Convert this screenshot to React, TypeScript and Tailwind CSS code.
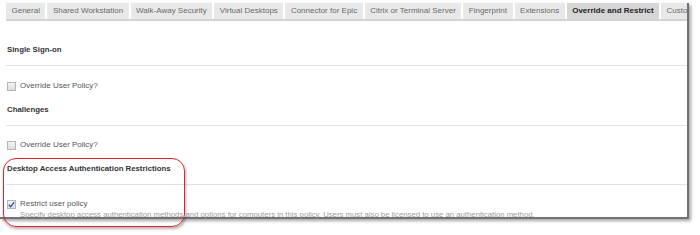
import React from "react";

const tabs = [
  "General",
  "Shared Workstation",
  "Walk-Away Security",
  "Virtual Desktops",
  "Connector for Epic",
  "Citrix or Terminal Server",
  "Fingerprint",
  "Extensions",
  "Override and Restrict",
  "Custom",
];

function Checkbox({ checked = false }: { checked?: boolean }) {
  return (
    <span className="relative inline-flex h-[9px] w-[9px] shrink-0 items-center justify-center border border-[#b5b5b5] bg-gradient-to-b from-[#f4f4f4] to-[#dedede]">
      {checked && (
        <svg viewBox="0 0 10 10" className="absolute h-[9px] w-[9px]">
          <path d="M2 5.2 L4.1 7.4 L8 2.4" fill="none" stroke="#3b5da6" strokeWidth="1.6" />
        </svg>
      )}
    </span>
  );
}

function Option({ label, checked }: { label: string; checked?: boolean }) {
  return (
    <label className="flex h-[12px] items-center gap-[4px] pl-[7px] text-[8px] leading-[12px] text-[#555]">
      <Checkbox checked={checked} />
      <span>{label}</span>
    </label>
  );
}

function Heading({ title, className = "" }: { title: string; className?: string }) {
  return (
    <div
      className={`ml-[6px] border-b border-[#e2e2e2] pb-[9px] pl-[1px] text-[7.8px] leading-[12px] font-bold text-[#333] ${className}`}
    >
      {title}
    </div>
  );
}

export default function App() {
  return (
    <div
      className="relative h-[235px] w-[700px] overflow-hidden bg-white"
      style={{ fontFamily: '"Liberation Sans", Arial, sans-serif' }}
    >
      <div className="mt-[9px] h-[216px] w-[689px] border-r-2 border-b-2 border-[#727272] shadow-[2px_2px_3px_rgba(0,0,0,0.35)]">
        <div className="-mt-[6px] overflow-hidden pl-[6px]">
          <div className="flex gap-[2px]">
            {tabs.map((t) => {
              const active = t === "Override and Restrict";
              return (
                <div
                  key={t}
                  className={`flex h-[16px] shrink-0 items-center px-[5.5px] text-[8px] whitespace-nowrap ${
                    active ? "bg-[#d6d6d6] font-bold text-[#222]" : "bg-[#e8e8e8] text-[#6a6a6a]"
                  }`}
                >
                  {t}
                </div>
              );
            })}
          </div>
          <div className="h-[2px] bg-[#d3d3d3]" />
        </div>

        <Heading title="Single Sign-on" className="pt-[23px]" />
        <div className="mt-[14px]">
          <Option label="Override User Policy?" />
        </div>

        <Heading title="Challenges" className="mt-[12px]" />
        <div className="mt-[13px]">
          <Option label="Override User Policy?" />
        </div>

        <Heading title="Desktop Access Authentication Restrictions" className="mt-[12px]" />
        <div className="mt-[13px]">
          <Option label="Restrict user policy" checked />
        </div>
        <div className="pl-[20px] text-[7.75px] leading-[10px] whitespace-nowrap text-[#9c9c9c]">
          Specify desktop access authentication methods and options for computers in this policy. Users must
          also be licensed to use an authentication method.
        </div>
      </div>

      <div className="pointer-events-none absolute top-[158px] left-[3px] h-[69px] w-[182px] rounded-[13px] border-[1.5px] border-[#e3212b] shadow-[1px_2px_3px_rgba(0,0,0,0.3)]" />
    </div>
  );
}
